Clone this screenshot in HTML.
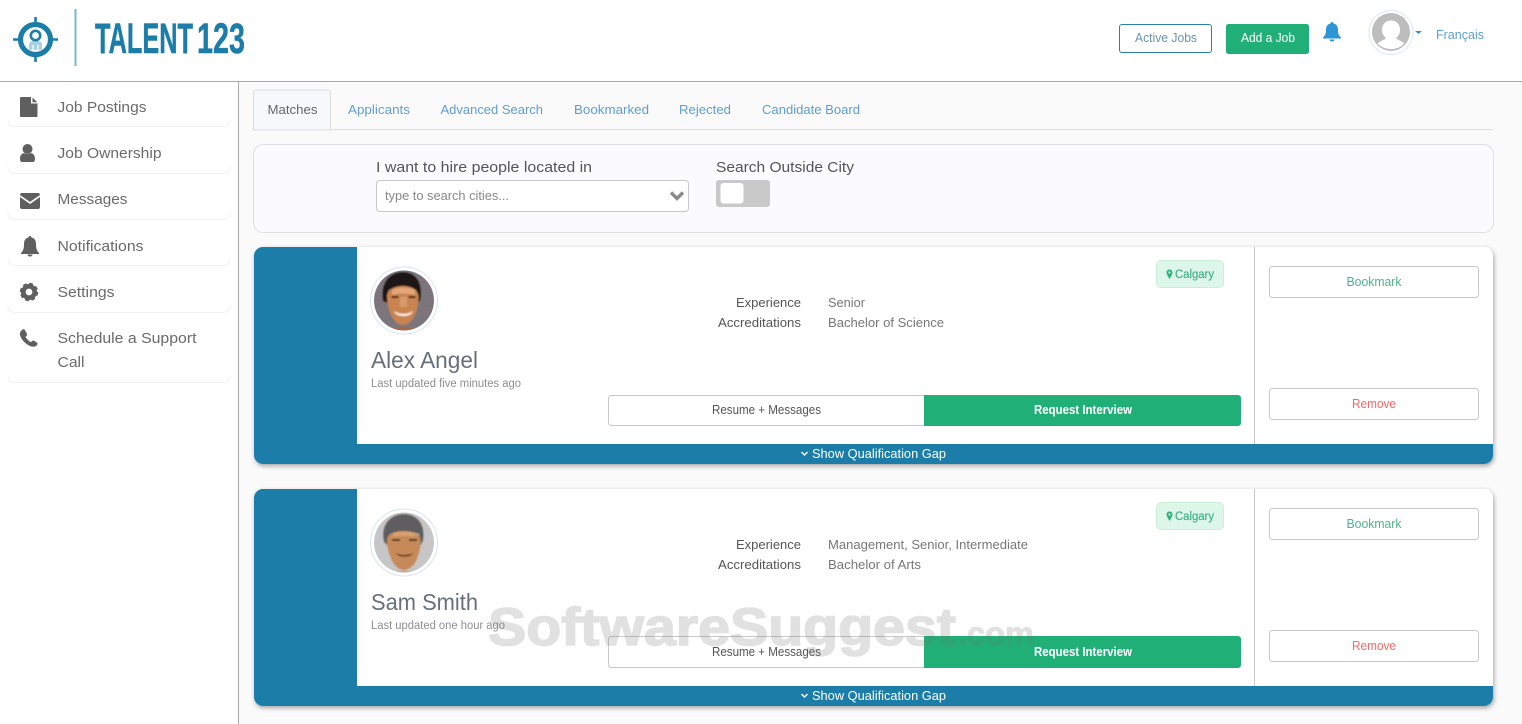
<!DOCTYPE html>
<html><head><meta charset="utf-8"><title>Talent123</title>
<style>
html,body{margin:0;padding:0;background:#fafafa;width:1522px;height:724px;overflow:hidden}
svg{display:block}
text{font-family:"Liberation Sans",sans-serif;font-size:14px}
</style></head><body>
<svg width="1522" height="724" viewBox="0 0 1522 724" xmlns="http://www.w3.org/2000/svg">
<defs>
<filter id="sh" x="-2%" y="-5%" width="104%" height="112%"><feDropShadow dx="1" dy="2" stdDeviation="2.5" flood-color="#000" flood-opacity=".35"/></filter>
<filter id="bl" x="-10%" y="-10%" width="120%" height="120%"><feGaussianBlur stdDeviation=".8"/></filter>
<clipPath id="c1"><circle cx="404" cy="300.5" r="30"/></clipPath>
<clipPath id="c2"><circle cx="404" cy="542.5" r="30"/></clipPath>
</defs>
<rect width="1522" height="724" fill="#fafafa"/>
<rect width="1522" height="81" fill="#fff"/>
<rect y="81" width="1522" height="1" fill="#7db8dc"/>
<rect y="82" width="238" height="642" fill="#fff"/>
<rect x="238" y="82" width="1" height="642" fill="#a8a8a8"/>

<!-- logo -->
<path d="M29 50v-5.500c0-2.500 2-3.500 4-3.500h5c2 0 4 1 4 3.500V50z" fill="#a9d2e4"/>
<path d="M33 45v5M38 45v5" stroke="#fff" stroke-width="1.200"/>
<g fill="none" stroke="#1b7da8">
<circle cx="35.500" cy="35.500" r="4.700" stroke-width="2.600"/>
<circle cx="35.500" cy="39.500" r="15" stroke-width="5.200"/>
<path d="M35.500 17v8M35.500 54v8M13 39.500h8M50 39.500h8" stroke-width="2.600"/>
</g>
<rect x="74.500" y="9" width="2" height="57" fill="#7ab6d3"/>
<text x="95" y="53" font-weight="700" fill="#1b7da8" stroke="#1b7da8" stroke-width=".5" textLength="98" lengthAdjust="spacingAndGlyphs" style="font-size:43px">TALENT</text>
<text x="197" y="53" font-weight="700" fill="#1b7da8" stroke="#1b7da8" stroke-width=".5" textLength="48" lengthAdjust="spacingAndGlyphs" style="font-size:43px">123</text>

<!-- top right -->
<rect x="1119.500" y="24.500" width="92" height="28" rx="2.500" fill="#fff" stroke="#2a7fae"/>
<text x="1135" y="42" fill="#6a93ae" textLength="62" lengthAdjust="spacingAndGlyphs" style="font-size:12.500px">Active Jobs</text>
<rect x="1226" y="24" width="83" height="30" rx="2.500" fill="#20b077"/>
<text x="1241" y="42" fill="#fff" textLength="54" lengthAdjust="spacingAndGlyphs" style="font-size:12.500px">Add a Job</text>
<path d="M1332 22c1 0 1.500.6 1.500 1.500 3.500.7 4.500 3.500 4.500 6.500 0 4 1 5.500 3 7.500v1h-18v-1c2-2 3-3.500 3-7.500 0-3 1-5.800 4.500-6.500 0-.9.500-1.500 1.500-1.500zM1329.500 39.500h5c0 1.200-1 2-2.500 2s-2.500-.8-2.500-2z" fill="#2f96d6"/>
<circle cx="1391" cy="32.500" r="22" fill="#fff" stroke="#dbe8f2"/>
<circle cx="1391" cy="32" r="19" fill="#bdbdbd"/>
<path d="M1391 20.500c5.500 0 9 4 9 9.500 0 3-1 5.500-3.500 7.500v1.500c3 1.200 6 2.500 8 4.500a19 19 0 0 1-27 0c2-2 5-3.300 8-4.500v-1.500c-2.500-2-3.500-4.500-3.500-7.500 0-5.500 3.500-9.500 9-9.500z" fill="#fff"/>
<path d="M1415 31h7l-3.500 3z" fill="#2f8fd0"/>
<text x="1436" y="39" fill="#5c9fd8" textLength="48" lengthAdjust="spacingAndGlyphs" style="font-size:13px">Français</text>

<!-- sidebar -->
<g fill="none" stroke="#f0f0f0">
<path d="M8 120c0 4 3 6.500 8 6.500h206c5 0 8-2.500 8-6.500"/>
<path d="M8 167c0 4 3 6.500 8 6.500h206c5 0 8-2.500 8-6.500"/>
<path d="M8 213c0 4 3 6.500 8 6.500h206c5 0 8-2.500 8-6.500"/>
<path d="M8 259c0 4 3 6.500 8 6.500h206c5 0 8-2.500 8-6.500"/>
<path d="M8 306c0 4 3 6.500 8 6.500h206c5 0 8-2.500 8-6.500"/>
<path d="M8 376c0 4 3 6.500 8 6.500h206c5 0 8-2.500 8-6.500"/>
</g>
<g fill="#5f5f5f">
<path d="M21 97h10v6.500h6.500V116a1 1 0 0 1-1 1H21a1 1 0 0 1-1-1V98a1 1 0 0 1 1-1zM32.500 97.500l4.700 4.700h-4.700z"/>
<circle cx="27.500" cy="149" r="5"/>
<path d="M20 159c0-4 2-5.500 4-6 2 1.500 5 1.500 7 0 2 .5 4 2 4 6 0 2-1 3-2.500 3h-10C21 162 20 161 20 159z"/>
<path d="M20 195c0-1.200.8-2 2-2h16c1.200 0 2 .8 2 2l-10 6.900zM20 197l10 7 10-7V207c0 1.200-.8 2-2 2H22c-1.200 0-2-.8-2-2z"/>
<path d="M30 236c1 0 1.500.6 1.500 1.500 3.500.7 4.500 3.500 4.500 6.500 0 5 1 7 3 9v1H21v-1c2-2 3-4 3-9 0-3 1-5.800 4.500-6.500 0-.9.500-1.500 1.500-1.500zM27.500 254.500h5c0 1.200-1 2-2.500 2s-2.500-.8-2.500-2z"/>
<path d="M22.500 331c1-1 2.300-1 3 .2l2 3.800c.4.800.1 1.500-1 2.300-.6.500-.4 1 .3 2l3 3c1 .8 1.600 1 2.200.3.800-1 1.500-1.400 2.300-1l3 1.900c1 .6 1 1.700.2 2.600-1.500 1.600-3.500 2-6 1.300-5.500-2-10-7-11-11.500-.4-2 .5-3.600 2-4.900z" transform="translate(-.5 -1)"/>
</g>
<circle cx="29" cy="292" r="5.700" fill="none" stroke="#5f5f5f" stroke-width="4.600"/>
<circle cx="29" cy="292" r="8" fill="none" stroke="#5f5f5f" stroke-width="2.400" stroke-dasharray="3.700 2.580"/>
<g fill="#6a6a6a">
<text x="57.500" y="112" textLength="89" lengthAdjust="spacingAndGlyphs" style="font-size:15px">Job Postings</text>
<text x="57.500" y="158" textLength="104" lengthAdjust="spacingAndGlyphs" style="font-size:15px">Job Ownership</text>
<text x="57.500" y="204" textLength="70" lengthAdjust="spacingAndGlyphs" style="font-size:15px">Messages</text>
<text x="57.500" y="251" textLength="86" lengthAdjust="spacingAndGlyphs" style="font-size:15px">Notifications</text>
<text x="57.500" y="297" textLength="57" lengthAdjust="spacingAndGlyphs" style="font-size:15px">Settings</text>
<text x="57.500" y="343" textLength="139" lengthAdjust="spacingAndGlyphs" style="font-size:15px">Schedule a Support</text>
<text x="57.500" y="367" textLength="27" lengthAdjust="spacingAndGlyphs" style="font-size:15px">Call</text>
</g>

<!-- tabs -->
<rect x="253" y="129" width="1240" height="1" fill="#dddddd"/>
<path d="M253.500 130V93a3 3 0 0 1 3-3h71a3 3 0 0 1 3 3v37z" fill="#f6f9fc" stroke="#dddddd"/>
<text x="267.500" y="114" fill="#666" textLength="50" lengthAdjust="spacingAndGlyphs" style="font-size:13px">Matches</text>
<g fill="#5f9dd3">
<text x="348" y="114" textLength="62" lengthAdjust="spacingAndGlyphs" style="font-size:13px">Applicants</text>
<text x="440.500" y="114" textLength="102.500" lengthAdjust="spacingAndGlyphs" style="font-size:13px">Advanced Search</text>
<text x="574" y="114" textLength="75" lengthAdjust="spacingAndGlyphs" style="font-size:13px">Bookmarked</text>
<text x="679" y="114" textLength="52" lengthAdjust="spacingAndGlyphs" style="font-size:13px">Rejected</text>
<text x="762" y="114" textLength="98" lengthAdjust="spacingAndGlyphs" style="font-size:13px">Candidate Board</text>
</g>

<!-- search panel -->
<rect x="253.500" y="144.500" width="1240" height="88" rx="10" fill="#fbfbfd" stroke="#e0e0e0"/>
<text x="376" y="172" fill="#555" textLength="216" lengthAdjust="spacingAndGlyphs" style="font-size:15px">I want to hire people located in</text>
<rect x="376.500" y="180.500" width="312" height="31" rx="3" fill="#fff" stroke="#c8c8c8"/>
<text x="385" y="200" fill="#888" textLength="124" lengthAdjust="spacingAndGlyphs" style="font-size:13px">type to search cities...</text>
<path d="M671 192.500l6 6 6-6" fill="none" stroke="#8a8a8a" stroke-width="3.400"/>
<text x="716" y="172" fill="#555" textLength="138" lengthAdjust="spacingAndGlyphs" style="font-size:15px">Search Outside City</text>
<rect x="716" y="180" width="54" height="27" rx="3" fill="#c9c9c9"/>
<rect x="720.500" y="183" width="23" height="20.500" rx="3" fill="#fff"/>

<!-- card 1 -->
<g>
<rect x="254" y="247" width="1239" height="217" rx="9" fill="#fff" filter="url(#sh)"/>
<path d="M263 247h94v197h1136v11a9 9 0 0 1-9 9H263a9 9 0 0 1-9-9V256a9 9 0 0 1 9-9z" fill="#1b7da8"/>
<rect x="1254" y="247" width="1" height="197" fill="#c8c8c8"/>
<circle cx="404" cy="300.500" r="33.500" fill="#fff" stroke="#d5e5f0"/>
<g clip-path="url(#c1)"><g filter="url(#bl)">
<rect x="370" y="266" width="70" height="70" fill="#7b767b"/>
<path d="M386 336c1-6 8-9 18-9s17 3 19 9z" fill="#a8664a"/>
<path d="M383 301c-3-18 6-29 20-29 13 0 20 10 17.500 28l-3 3-1-13c-8-4-19-4-28 0l-1 13z" fill="#1d1512"/>
<path d="M387 296c0-6 7-10 16-10 9 0 15 4 15.500 10 .5 14-6 29-15.500 29-9 0-16-15-16-29z" fill="#c98350"/>
<path d="M392 290c5-3 17-3 23 0v5c-7-2-16-2-23 0z" fill="#e4a678"/>
<path d="M400 297v10h7v-10z" fill="#d89a6a"/>
<path d="M391.500 297h7M408.500 297h7" stroke="#3a2218" stroke-width="2"/>
<path d="M394 311c5 3.500 14 3.500 19 0-2 7-17 7-19 0z" fill="#f6e6da"/>
</g></g>
<text x="371" y="368" fill="#67707a" textLength="107" lengthAdjust="spacingAndGlyphs" style="font-size:23px">Alex Angel</text>
<text x="371" y="387" fill="#8f8f8f" textLength="150" lengthAdjust="spacingAndGlyphs" style="font-size:11.500px">Last updated five minutes ago</text>
<text x="736" y="307" fill="#555" textLength="65" lengthAdjust="spacingAndGlyphs" style="font-size:13px">Experience</text>
<text x="718" y="327" fill="#555" textLength="83" lengthAdjust="spacingAndGlyphs" style="font-size:13px">Accreditations</text>
<text x="828" y="307" fill="#777" textLength="37" lengthAdjust="spacingAndGlyphs" style="font-size:13px">Senior</text>
<text x="828" y="327" fill="#777" textLength="116" lengthAdjust="spacingAndGlyphs" style="font-size:13px">Bachelor of Science</text>
<rect x="1156.500" y="260.500" width="67" height="27" rx="4.500" fill="#dcf6ea" stroke="#cdeed6"/>
<path d="M1169.500 269.500c2 0 3 1.500 3 3 0 1.500-1.500 4-3 6.500-1.500-2.500-3-5-3-6.500 0-1.500 1-3 3-3z" fill="#2fb27a"/>
<circle cx="1169.500" cy="272.500" r="1.100" fill="#dcf6ea"/>
<text x="1175" y="278" fill="#43b285" stroke="#43b285" stroke-width=".2" textLength="39" lengthAdjust="spacingAndGlyphs" style="font-size:11.500px">Calgary</text>
<rect x="1269.500" y="266.500" width="209" height="31" rx="3" fill="#fff" stroke="#c8c8c8"/>
<text x="1346.500" y="286" fill="#4db38a" textLength="55" lengthAdjust="spacingAndGlyphs" style="font-size:12.500px">Bookmark</text>
<rect x="1269.500" y="388.500" width="209" height="31" rx="3" fill="#fff" stroke="#c8c8c8"/>
<text x="1352" y="408" fill="#ff6464" textLength="44" lengthAdjust="spacingAndGlyphs" style="font-size:12.500px">Remove</text>
<rect x="608.500" y="395.500" width="320" height="30" rx="3" fill="#fff" stroke="#c8c8c8"/>
<path d="M924 395h314a3 3 0 0 1 3 3v25a3 3 0 0 1-3 3H924z" fill="#20b077"/>
<text x="712" y="414" fill="#555" textLength="109" lengthAdjust="spacingAndGlyphs" style="font-size:12.500px">Resume + Messages</text>
<text x="1034" y="414" fill="#fff" font-weight="700" textLength="98" lengthAdjust="spacingAndGlyphs" style="font-size:12.500px">Request Interview</text>
<path d="M801.500 452l3 3 3-3" fill="none" stroke="#fff" stroke-width="1.400"/>
<text x="812" y="458" fill="#fff" textLength="134" lengthAdjust="spacingAndGlyphs" style="font-size:13px">Show Qualification Gap</text>
</g>

<!-- card 2 -->
<g>
<rect x="254" y="489" width="1239" height="217" rx="9" fill="#fff" filter="url(#sh)"/>
<path d="M263 489h94v197h1136v11a9 9 0 0 1-9 9H263a9 9 0 0 1-9-9V498a9 9 0 0 1 9-9z" fill="#1b7da8"/>
<rect x="1254" y="489" width="1" height="197" fill="#c8c8c8"/>
<circle cx="404" cy="542.500" r="33.500" fill="#fff" stroke="#d5e5f0"/>
<g clip-path="url(#c2)"><g filter="url(#bl)">
<rect x="370" y="508" width="70" height="70" fill="#c6c6c6"/>
<path d="M386 578c2-5 10-7 18-7s15 2 18 7z" fill="#c9a27c"/>
<path d="M384 542c-4-18 7-28 20-28 13 0 22 10 19 27l-3 5-1-12c-8-3-19-3-29 0l-2 12z" fill="#5e5d5f"/>
<path d="M387 540c0-6 8-9 17-9 9 0 16 3 16.500 9 .5 14-6 30-16.500 30-10 0-17-16-17-30z" fill="#c58a58"/>
<path d="M393 533c6-2 16-2 22 0v4c-7-1.500-15-1.500-22 0z" fill="#d8a070"/>
<path d="M392 540h8M409 540h8" stroke="#4a3022" stroke-width="2"/>
<path d="M396 553c5 2.500 12 2.500 17 0-2 5-15 5-17 0z" fill="#6a3a28"/>
</g></g>
<text x="371" y="610" fill="#67707a" textLength="107" lengthAdjust="spacingAndGlyphs" style="font-size:23px">Sam Smith</text>
<text x="371" y="629" fill="#8f8f8f" textLength="134" lengthAdjust="spacingAndGlyphs" style="font-size:11.500px">Last updated one hour ago</text>
<text x="736" y="549" fill="#555" textLength="65" lengthAdjust="spacingAndGlyphs" style="font-size:13px">Experience</text>
<text x="718" y="569" fill="#555" textLength="83" lengthAdjust="spacingAndGlyphs" style="font-size:13px">Accreditations</text>
<text x="828" y="549" fill="#777" textLength="200" lengthAdjust="spacingAndGlyphs" style="font-size:13px">Management, Senior, Intermediate</text>
<text x="828" y="569" fill="#777" textLength="93" lengthAdjust="spacingAndGlyphs" style="font-size:13px">Bachelor of Arts</text>
<rect x="1156.500" y="502.500" width="67" height="27" rx="4.500" fill="#dcf6ea" stroke="#cdeed6"/>
<path d="M1169.500 511.500c2 0 3 1.500 3 3 0 1.500-1.500 4-3 6.500-1.500-2.500-3-5-3-6.500 0-1.500 1-3 3-3z" fill="#2fb27a"/>
<circle cx="1169.500" cy="514.500" r="1.100" fill="#dcf6ea"/>
<text x="1175" y="520" fill="#43b285" stroke="#43b285" stroke-width=".2" textLength="39" lengthAdjust="spacingAndGlyphs" style="font-size:11.500px">Calgary</text>
<rect x="1269.500" y="508.500" width="209" height="31" rx="3" fill="#fff" stroke="#c8c8c8"/>
<text x="1346.500" y="528" fill="#4db38a" textLength="55" lengthAdjust="spacingAndGlyphs" style="font-size:12.500px">Bookmark</text>
<rect x="1269.500" y="630.500" width="209" height="31" rx="3" fill="#fff" stroke="#c8c8c8"/>
<text x="1352" y="650" fill="#ff6464" textLength="44" lengthAdjust="spacingAndGlyphs" style="font-size:12.500px">Remove</text>
<rect x="608.500" y="636.500" width="320" height="31" rx="3" fill="#fff" stroke="#c8c8c8"/>
<path d="M924 636h314a3 3 0 0 1 3 3v26a3 3 0 0 1-3 3H924z" fill="#20b077"/>
<text x="712" y="656" fill="#555" textLength="109" lengthAdjust="spacingAndGlyphs" style="font-size:12.500px">Resume + Messages</text>
<text x="1034" y="656" fill="#fff" font-weight="700" textLength="98" lengthAdjust="spacingAndGlyphs" style="font-size:12.500px">Request Interview</text>
<path d="M801.500 694l3 3 3-3" fill="none" stroke="#fff" stroke-width="1.400"/>
<text x="812" y="700" fill="#fff" textLength="134" lengthAdjust="spacingAndGlyphs" style="font-size:13px">Show Qualification Gap</text>
</g>

<!-- watermark -->
<g opacity=".2" fill="#707070" stroke="#707070" font-weight="700">
<text x="488" y="645" stroke-width="1.600" textLength="468" lengthAdjust="spacingAndGlyphs" style="font-size:53px">SoftwareSuggest</text>
<text x="958" y="645" stroke-width="1" textLength="76" lengthAdjust="spacingAndGlyphs" style="font-size:33px">.com</text>
</g>
</svg>
</body></html>
